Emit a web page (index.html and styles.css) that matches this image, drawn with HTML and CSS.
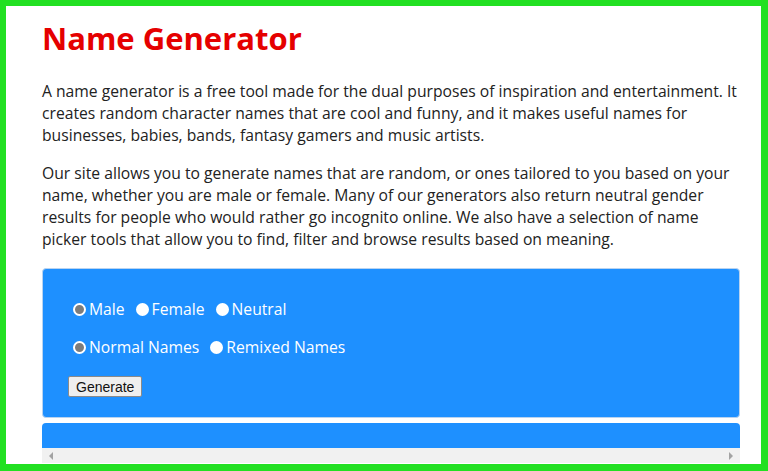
FILE: index.html
```html
<!DOCTYPE html>
<html lang="en">
<head>
	<meta charset="UTF-8">
	<title>Name Generator</title>
	<link rel="stylesheet" href="styles.css">
</head>
<body>
	<div id="frame">
		<h1>Name Generator</h1>
		<p>A name generator is a free tool made for the dual purposes of inspiration and entertainment. It creates random character names that are cool and funny, and it makes useful names for businesses, babies, bands, fantasy gamers and music artists.</p>
		<p>Our site allows you to generate names that are random, or ones tailored to you based on your name, whether you are male or female. Many of our generators also return neutral gender results for people who would rather go incognito online. We also have a selection of name picker tools that allow you to find, filter and browse results based on meaning.</p>
		<form class="gen">
			<div class="row">
				<label><input type="radio" name="gender" checked>Male</label>
				<label><input type="radio" name="gender">Female</label>
				<label><input type="radio" name="gender">Neutral</label>
			</div>
			<div class="row">
				<label><input type="radio" name="kind" checked>Normal Names</label>
				<label><input type="radio" name="kind">Remixed Names</label>
			</div>
			<input type="button" value="Generate" class="btn">
		</form>
		<div class="result">
			<div class="result-in"></div>
			<div class="scroll">
				<span class="arr arr-l"></span>
				<span class="arr arr-r"></span>
			</div>
		</div>
	</div>
</body>
</html>
```

FILE: styles.css
```css
*{margin:0px;padding:0px;box-sizing:border-box;}
body{
	background: #fff;
	font-family: "Open Sans", "Noto Sans", sans-serif;
}
#frame{
	width: 768px;
	height: 471px;
	border-style: solid;
	border-color: #22e022;
	border-width: 6px 7px 7px 6px;
	padding: 12px 21px 0 36px;
	overflow: hidden;
}
h1{
	color: #e50000;
	font-size: 31px;
	font-weight: bold;
	line-height: 40px;
}
p{
	color: #222;
	font-size: 15.7px;
	line-height: 22px;
	margin: 0 0 16px;
}
h1 + p{
	margin-top: 22px;
}
.gen{
	margin-top: 18px;
	height: 150px;
	background: #1e90ff;
	border: 1px solid #b9d3f0;
	border-radius: 4px;
	padding: 29px 25px 0;
	color: #fff;
}
.gen .row{
	font-size: 15.7px;
	line-height: 22px;
	margin-bottom: 16px;
	display: flex;
	align-items: center;
}
.gen label{
	display: flex;
	align-items: center;
	margin-right: 6px;
}
.gen input[type=radio]{
	-webkit-appearance: none;
	appearance: none;
	width: 13px;
	height: 13px;
	margin: 0 3px 0 5px;
	border-radius: 50%;
	background: #fff;
	border: 2px solid #fff;
}
.gen input[type=radio]:checked{
	background: #7c7c7c;
}
.btn{
	margin-top: 2px;
	font-family: "Liberation Sans", Arial, sans-serif;
	font-size: 14px;
	color: #111;
	background: #efefef;
	border: 1px solid #8a8a8a;
	border-radius: 2px;
	padding: 1px 7px;
	height: 21px;
}
.result{
	margin-top: 5px;
}
.result-in{
	height: 25px;
	background: #1e90ff;
	border-radius: 4px 4px 0 0;
}
.scroll{
	height: 15px;
	background: #f1f1f1;
	display: flex;
	justify-content: space-between;
	align-items: center;
	padding: 0 7px;
}
.arr{
	width: 0;
	height: 0;
	border-top: 4px solid transparent;
	border-bottom: 4px solid transparent;
}
.arr-l{
	border-right: 4px solid #a3a3a3;
}
.arr-r{
	border-left: 4px solid #a3a3a3;
}
```
